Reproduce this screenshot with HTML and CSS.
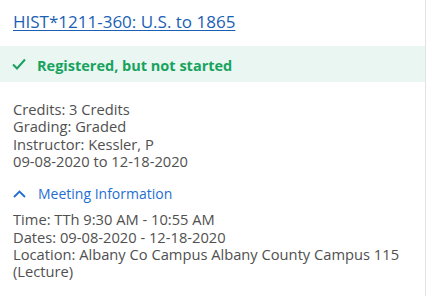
FILE: index.html
```html
<!DOCTYPE html>
<html>
<head>
<meta charset="utf-8">
<link rel="stylesheet" href="styles.css">
</head>
<body>
<div class="card">
  <div class="title-row"><a class="course-link" href="#">HIST*1211-360: U.S. to 1865</a></div>
  <div class="status">
    <svg class="check" width="14" height="12" viewBox="0 0 14 12"><path d="M1 6.5 L5 10.5 L13 1.5" fill="none" stroke="#1aa160" stroke-width="2"/></svg>
    <span>Registered, but not started</span>
  </div>
  <div class="details">
    <div>Credits: 3 Credits</div>
    <div>Grading: Graded</div>
    <div>Instructor: Kessler, P</div>
    <div>09-08-2020 to 12-18-2020</div>
  </div>
  <div class="meeting-toggle">
    <svg class="chev" width="13" height="8" viewBox="0 0 13 8"><path d="M1 7 L6.5 1.5 L12 7" fill="none" stroke="#1f6fd1" stroke-width="1.8"/></svg>
    <span>Meeting Information</span>
  </div>
  <div class="details meeting">
    <div>Time: TTh 9:30 AM - 10:55 AM</div>
    <div>Dates: 09-08-2020 - 12-18-2020</div>
    <div>Location: Albany Co Campus Albany County Campus 115 (Lecture)</div>
  </div>
</div>
</body>
</html>
```
FILE: styles.css
```css
html, body {
  margin: 0;
  padding: 0;
  background: #fff;
}
body {
  font-family: "Open Sans", "Liberation Sans", sans-serif;
}
.card {
  width: 425px;
  height: 296px;
  border-right: 1px solid #e2e2e2;
  box-sizing: content-box;
}
.title-row {
  padding: 10px 13px 0;
  line-height: 24px;
}
.course-link {
  font-size: 17px;
  color: #1b5fb5;
  text-decoration: underline;
  text-underline-offset: 2px;
}
.status {
  margin-top: 12px;
  height: 36px;
  box-sizing: border-box;
  padding-top: 3px;
  background: #e9f6f1;
  display: flex;
  align-items: center;
  padding-left: 12px;
  gap: 11px;
  font-size: 14.5px;
  font-weight: 700;
  color: #17a35e;
}
.check {
  margin-top: -3px;
}
.details {
  padding: 19px 13px 0;
  font-size: 14.7px;
  line-height: 17.4px;
  color: #505050;
}
.meeting-toggle {
  display: flex;
  align-items: center;
  gap: 12px;
  padding: 13px 13px 0;
  font-size: 14px;
  line-height: 20px;
  color: #1f6fd1;
}
.details.meeting {
  padding-top: 7.5px;
  padding-right: 20px;
}
```
